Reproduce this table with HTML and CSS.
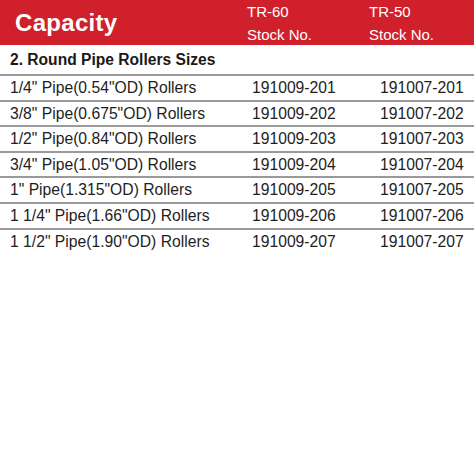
FILE: index.html
```html
<!DOCTYPE html>
<html>
<head>
<meta charset="utf-8">
<link rel="stylesheet" href="styles.css">
</head>
<body>
<div class="sheet">
  <div class="head">
    <div class="title">Capacity</div>
    <div class="colhead"><span>TR-60</span><span>Stock No.</span></div>
    <div class="colhead"><span>TR-50</span><span>Stock No.</span></div>
  </div>
  <div class="section">2. Round Pipe Rollers Sizes</div>
  <div class="rows">
    <div class="row"><span class="lbl">1/4" Pipe(0.54"OD) Rollers</span><span>191009-201</span><span>191007-201</span></div>
    <div class="row"><span class="lbl">3/8" Pipe(0.675"OD) Rollers</span><span>191009-202</span><span>191007-202</span></div>
    <div class="row"><span class="lbl">1/2" Pipe(0.84"OD) Rollers</span><span>191009-203</span><span>191007-203</span></div>
    <div class="row"><span class="lbl">3/4" Pipe(1.05"OD) Rollers</span><span>191009-204</span><span>191007-204</span></div>
    <div class="row"><span class="lbl">1" Pipe(1.315"OD) Rollers</span><span>191009-205</span><span>191007-205</span></div>
    <div class="row"><span class="lbl">1 1/4" Pipe(1.66"OD) Rollers</span><span>191009-206</span><span>191007-206</span></div>
    <div class="row"><span class="lbl">1 1/2" Pipe(1.90"OD) Rollers</span><span>191009-207</span><span>191007-207</span></div>
  </div>
</div>
</body>
</html>
```
FILE: styles.css
```css
html, body {
  margin: 0;
  padding: 0;
  background: #ffffff;
}
.sheet {
  width: 474px;
  height: 474px;
  font-family: "Liberation Sans", Arial, sans-serif;
  color: #1a1a1a;
}
.head {
  background: #d0202b;
  height: 45px;
  display: grid;
  grid-template-columns: 247px 122px 1fr;
  color: #ffffff;
}
.title {
  font-weight: bold;
  font-size: 24px;
  padding-left: 15px;
  line-height: 45px;
  letter-spacing: 0.3px;
}
.colhead {
  display: flex;
  flex-direction: column;
  font-size: 15px;
  line-height: 23px;
  padding-top: 0px;
}
.section {
  height: 29px;
  font-weight: bold;
  font-size: 15.6px;
  line-height: 29px;
  padding-left: 10px;
}
.row {
  display: grid;
  grid-template-columns: 252px 128px 1fr;
  border-top: 2px solid #9a9a9a;
  height: 23.6px;
  line-height: 23.6px;
  font-size: 15.7px;
  color: #1e1e1e;
}
.lbl {
  padding-left: 10px;
}
```
